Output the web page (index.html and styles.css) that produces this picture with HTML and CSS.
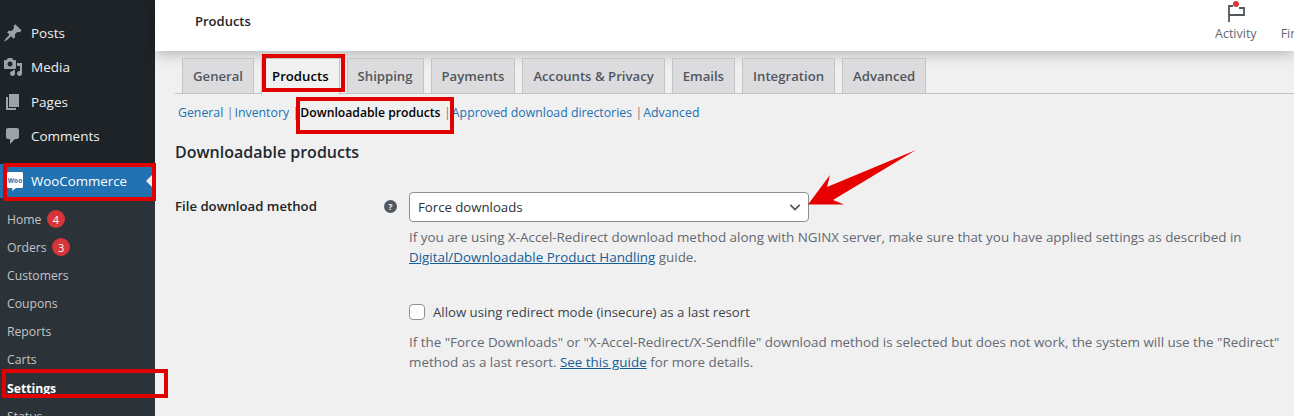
FILE: index.html
```html
<!DOCTYPE html>
<html lang="en">
<head>
<meta charset="utf-8">
<title>Products</title>
<link rel="stylesheet" href="styles.css">
</head>
<body>
<div class="app">
  <aside class="sidebar">
    <nav class="menu">
      <a class="menu-item"><svg class="menu-icon" viewBox="0 0 20 20"><path fill="#9ca2a7" d="M10.44 3.02l1.82-1.82 6.36 6.35-1.83 1.82c-1.05-.68-2.48-.57-3.41.36l-.75.75c-.92.93-1.04 2.35-.35 3.41l-1.83 1.82-2.41-2.41-2.8 2.79c-.42.42-3.38 2.71-3.8 2.29s1.86-3.39 2.28-3.81l2.79-2.79L4.1 9.36l1.83-1.82c1.05.69 2.48.57 3.4-.36l.75-.75c.93-.92 1.05-2.35.36-3.41z"/></svg><span>Posts</span></a>
      <a class="menu-item"><svg class="menu-icon" viewBox="0 0 20 20"><path fill="#9ca2a7" d="M13 11V4c0-.55-.45-1-1-1h-1.67L9 1H5L3.67 3H2c-.55 0-1 .45-1 1v7c0 .55.45 1 1 1h10c.55 0 1-.45 1-1zM7 4.5c1.38 0 2.5 1.12 2.5 2.5S8.380 9.500 7 9.500 4.500 8.380 4.500 7 5.620 4.500 7 4.500zM14 6h5v10.500c0 1.380-1.120 2.500-2.500 2.500S14 17.880 14 16.500s1.120-2.500 2.500-2.500c.17 0 .34.020.5.050V9h-3V6zm-4 8.050V13h2v3.500c0 1.380-1.120 2.500-2.500 2.500S7 17.880 7 16.500 8.120 14 9.500 14c.17 0 .34.020.5.050z"/></svg><span>Media</span></a>
      <a class="menu-item"><svg class="menu-icon" viewBox="0 0 20 20"><path fill="#9ca2a7" d="M6 15V2h10v13H6zm-1 1h8v2H3V5h2v11z"/></svg><span>Pages</span></a>
      <a class="menu-item"><svg class="menu-icon" viewBox="0 0 20 20"><path fill="#9ca2a7" d="M5 2h9c1.100 0 2 .9 2 2v7c0 1.100-.9 2-2 2h-2l-5 5v-5H5c-1.100 0-2-.9-2-2V4c0-1.100.9-2 2-2z"/></svg><span>Comments</span></a>
    </nav>
    <a class="woo-item">
      <svg class="woo-icon" viewBox="0 0 16 20"><path fill="#fff" d="M1.500 1h13c.9 0 1.500.6 1.500 1.500v13c0 .9-.6 1.500-1.500 1.500H9l-4 3 .5-3h-4C.6 17 0 16.400 0 15.500v-13C0 1.600.6 1 1.500 1z"/><text x="8" y="11.500" class="woo-glyph">Woo</text></svg>
      <span>WooCommerce</span>
      <i class="woo-caret"></i>
    </a>
    <ul class="submenu">
      <li><a>Home</a><b class="count">4</b></li>
      <li><a>Orders</a><b class="count">3</b></li>
      <li><a>Customers</a></li>
      <li><a>Coupons</a></li>
      <li><a>Reports</a></li>
      <li><a>Carts</a></li>
      <li class="current"><a>Settings</a></li>
      <li><a>Status</a></li>
    </ul>
  </aside>
  <div class="main">
    <header class="topbar">
      <h1>Products</h1>
      <div class="top-actions">
        <div class="top-action">
          <svg class="flag" viewBox="0 0 20 22"><path fill="none" stroke="#50575e" stroke-width="1.800" d="M3 22V6h4M3 15h15V8h-5"/><circle cx="10" cy="4" r="3" fill="#d63638"/></svg>
          <span>Activity</span>
        </div>
        <div class="top-action"><svg class="flag" viewBox="0 0 20 22"></svg><span>Finish setup</span></div>
      </div>
    </header>
    <div class="content">
      <nav class="tabs">
        <a class="tab">General</a>
        <a class="tab active">Products</a>
        <a class="tab">Shipping</a>
        <a class="tab">Payments</a>
        <a class="tab">Accounts &amp; Privacy</a>
        <a class="tab">Emails</a>
        <a class="tab">Integration</a>
        <a class="tab">Advanced</a>
      </nav>
      <ul class="subsubsub">
        <li><a>General</a><i>|</i></li>
        <li><a>Inventory</a><i>|</i></li>
        <li><a class="here">Downloadable products</a><i>|</i></li>
        <li><a>Approved download directories</a><i>|</i></li>
        <li><a>Advanced</a></li>
      </ul>
      <h2>Downloadable products</h2>
      <div class="field">
        <div class="field-label"><label>File download method</label><span class="help">?</span></div>
        <div class="field-body">
          <div class="select"><span>Force downloads</span><svg viewBox="0 0 14 8"><path fill="none" stroke="#50575e" stroke-width="2" d="M1.500 1l5.500 5.500L12.500 1"/></svg></div>
          <p class="desc">If you are using X-Accel-Redirect download method along with NGINX server, make sure that you have applied settings as described in<br><a>Digital/Downloadable Product Handling</a> guide.</p>
        </div>
      </div>
      <div class="field field-check">
        <div class="field-label"></div>
        <div class="field-body">
          <label class="check"><span class="box"></span>Allow using redirect mode (insecure) as a last resort</label>
          <p class="desc">If the "Force Downloads" or "X-Accel-Redirect/X-Sendfile" download method is selected but does not work, the system will use the "Redirect"<br>method as a last resort. <a>See this guide</a> for more details.</p>
        </div>
      </div>
    </div>
  </div>
</div>
<div class="mark mark-woo"></div>
<div class="mark mark-settings"></div>
<div class="mark mark-products"></div>
<div class="mark mark-down"></div>
<svg class="arrow" viewBox="0 0 109 56"><path fill="#e60000" d="M108 0 25 50 36 54.500H0L22 25 19 37z"/></svg>
</body>
</html>
```
FILE: styles.css
```css
* { box-sizing: border-box; }
html, body { margin: 0; height: 416px; overflow: hidden; }
body {
  position: relative;
  background: #f0f0f1;
  font-family: "Open Sans", "Noto Sans", sans-serif;
  font-size: 13.2px;
  color: #3c434a;
}
.app { display: flex; width: 1294px; height: 416px; overflow: hidden; }
.sidebar { width: 155px; flex: none; background: #1d2327; display: flex; flex-direction: column; }
.menu { padding-top: 16px; display: flex; flex-direction: column; height: 164px; flex: none; }
.menu-item { display: flex; align-items: center; height: 34.3px; flex: none; color: #f0f0f1; font-size: 13.5px; }
.menu-icon { width: 20px; height: 20px; margin: 0 8px 0 3px; flex: none; }
.woo-item {
  height: 34px; flex: none; background: #2271b1; color: #fff; display: flex; align-items: center;
  padding-left: 7px; font-size: 13.3px; position: relative;
}
.woo-icon { width: 16px; height: 20px; margin-right: 8px; flex: none; }
.woo-glyph { font: bold 6.500px "Open Sans", sans-serif; fill: #2271b1; text-anchor: middle; }
.woo-caret {
  position: absolute; right: 3px; top: 11px; width: 0; height: 0;
  border: 6px solid transparent; border-right-color: #f0f0f1; border-left-width: 0;
}
.submenu { list-style: none; margin: 0; padding: 7px 0 0; flex: 1; background: #2c3338; }
.submenu li { height: 28.16px; display: flex; align-items: center; padding-left: 7px; color: #c3c4c7; font-size: 12.200px; }
.submenu .current { color: #fff; font-weight: 700; }
.count {
  width: 18px; height: 18px; border-radius: 50%; background: #d63638; color: #fff;
  font-size: 11px; font-weight: 400; display: flex; align-items: center; justify-content: center; margin-left: 5.500px;
}
.main { flex: 1; min-width: 0; display: flex; flex-direction: column; }
.topbar {
  height: 51px; flex: none; background: #fff; display: flex; justify-content: space-between;
  padding-left: 40px; box-shadow: 0 2px 14px rgba(0,0,0,.28); position: relative;
}
.topbar h1 { margin: 0; font-size: 13px; font-weight: 600; color: #1d2327; line-height: 42px; }
.top-actions { display: flex; gap: 24px; width: 79px; flex: none; overflow: hidden; }
.top-action { display: flex; flex-direction: column; align-items: center; color: #646970; font-size: 12.500px; white-space: nowrap; }
.top-action span { line-height: 16px; }
.flag { width: 20px; height: 22px; margin: 0 0 4px; flex: none; }
.content { padding: 7px 0 0 20px; flex: 1; min-width: 0; }
.tabs { display: flex; gap: 7px; height: 36px; margin-left: 7px; position: relative; }
.tabs::after { content: ""; position: absolute; left: -7px; right: 0; bottom: 0; height: 1px; background: #c3c4c7; }
.tab {
  height: 36px; padding: 0 10px; line-height: 35px; background: #dcdcde; border: 1px solid #c3c4c7;
  border-bottom: 0; color: #50575e; font-weight: 600; font-size: 13.16px; white-space: nowrap;
}
.tab.active { background: #f0f0f1; color: #000; position: relative; z-index: 1; height: 37px; }
.subsubsub { list-style: none; margin: 0; padding: 10px 0 0 3px; display: flex; height: 37px; font-size: 12.300px; color: #787c82; white-space: nowrap; }
.subsubsub li { display: flex; }
.subsubsub a { color: #2271b1; }
.subsubsub i { font-style: normal; padding: 0 1px 0 3.500px; }
.subsubsub .here { color: #000; font-weight: 600; font-size: 12.200px; }
h2 { margin: 9px 0 0; font-size: 16px; font-weight: 600; color: #23282d; line-height: 24px; }
.field { display: flex; margin-top: 28px; }
.field-label { width: 234px; flex: none; display: flex; justify-content: space-between; padding: 0 12px 0 0; line-height: 28px; }
.field-label label { font-weight: 600; color: #1d2327; }
.help {
  width: 13px; height: 13px; border-radius: 50%; background: #50575e; color: #f0f0f1; font-size: 9px; font-weight: 700;
  line-height: 13px; text-align: center; margin-top: 8px;
}
.field-body { flex: 1; min-width: 0; white-space: nowrap; }
.select {
  width: 400px; height: 30px; background: #fff; border: 1px solid #8c8f94; border-radius: 4px;
  display: flex; align-items: center; justify-content: space-between; padding: 0 7px 0 8px; color: #2c3338;
}
.select svg { width: 12px; height: 7px; }
.desc { margin: 0; color: #646970; line-height: 20px; font-size: 13.400px; }
.field-body > .desc { margin-top: 5px; }
.desc a { color: #135e96; text-decoration: underline; }
.field-check { margin-top: 33px; }
.field-body > .check + .desc { margin-top: 8px; }
.check { display: flex; align-items: center; height: 24px; color: #3c434a; gap: 8px; }
.box { width: 16px; height: 16px; background: #fff; border: 1px solid #8c8f94; border-radius: 4px; }
.mark { position: absolute; z-index: 2; border: 4px solid #e00000; }
.mark-woo { left: 3px; top: 163px; width: 153px; height: 38px; }
.mark-settings { left: 2px; top: 369px; width: 166px; height: 29px; }
.mark-products { left: 262px; top: 54px; width: 83px; height: 38px; }
.mark-down { left: 296px; top: 97px; width: 158px; height: 37px; }
.arrow { position: absolute; z-index: 2; left: 808px; top: 150px; width: 109px; height: 56px; }
```
